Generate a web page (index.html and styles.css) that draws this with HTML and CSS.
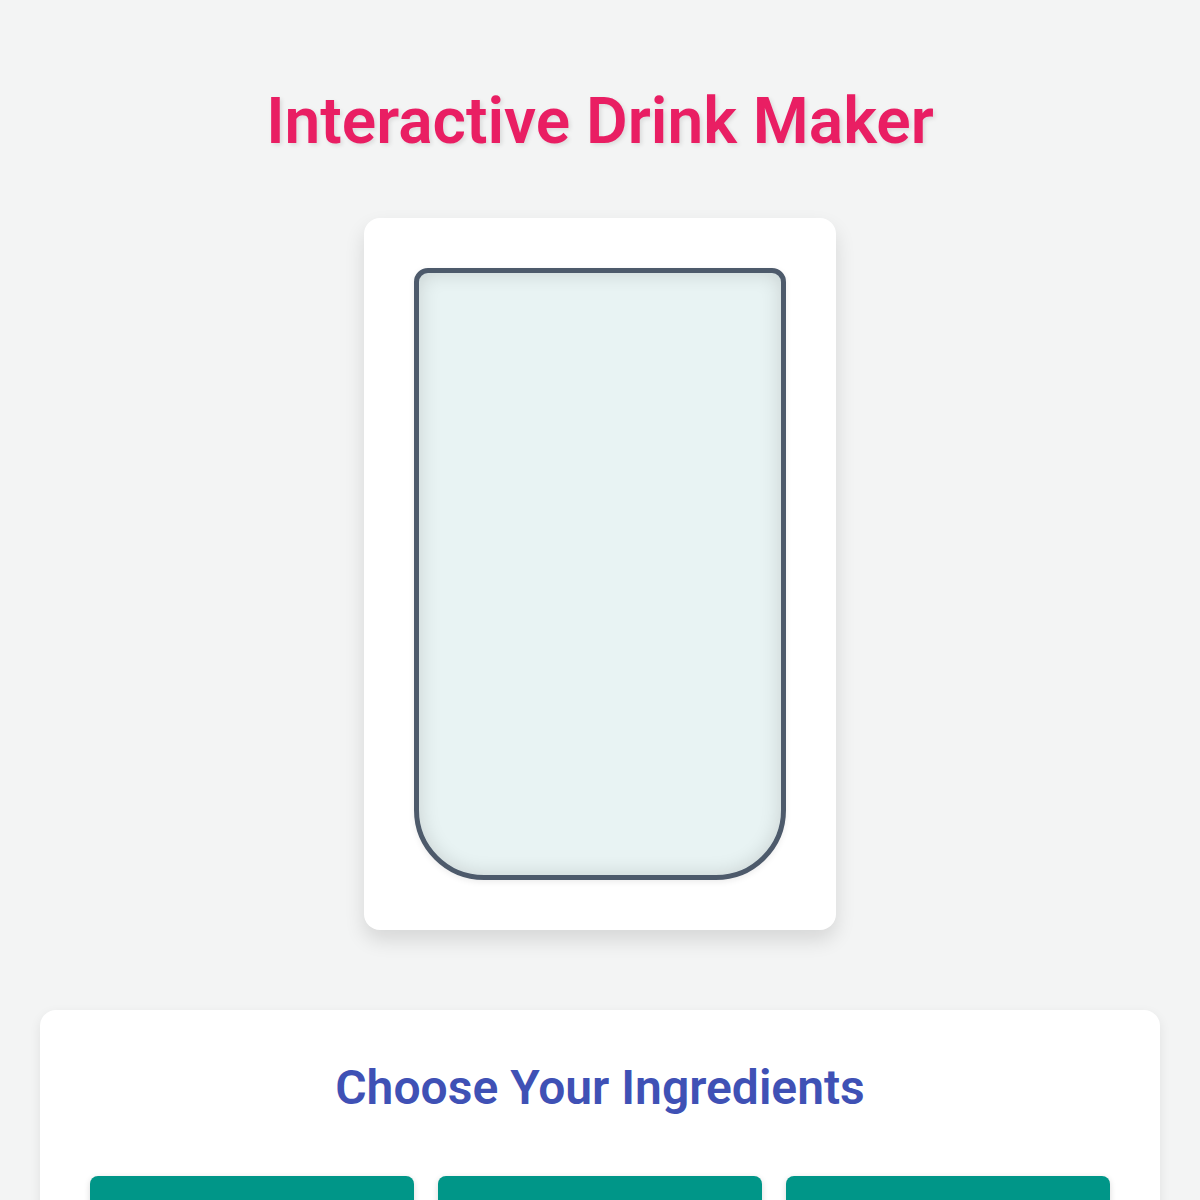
FILE: index.html
```
<!DOCTYPE html>
<html lang="en">
<head>
    <meta charset="utf-8" />
    <title>Interactive Drink Maker</title>
    <link rel="stylesheet" href="styles.css">
</head>
<body>
    <h1 class="title">Interactive Drink Maker</h1>
    <div class="glass-card">
        <div class="glass"></div>
    </div>
    <section class="panel">
        <h2 class="panel-title">Choose Your Ingredients</h2>
        <div class="ingredients">
            <button class="ingredient">Orange Juice</button>
            <button class="ingredient">Lemonade</button>
            <button class="ingredient">Cranberry</button>
        </div>
    </section>
</body>
</html>
```

FILE: styles.css
```
body {
    margin: 0;
    padding: 40px 40px;
    background: #f3f4f4;
    font-family: Roboto, "Noto Sans", sans-serif;
}
.title {
    margin: 44px 0 57px;
    text-align: center;
    font-size: 64px;
    font-weight: 600;
    line-height: 1.2;
    color: #e91e63;
    text-shadow: 2px 2px 4px rgba(0, 0, 0, 0.1);
}
.glass-card {
    width: 372px;
    margin: 0 auto;
    padding: 50px;
    background: #fff;
    border-radius: 16px;
    box-shadow: 0 10px 20px rgba(0, 0, 0, 0.12);
}
.glass {
    height: 602px;
    border: 5px solid #4d5a6b;
    border-radius: 14px 14px 70px 70px;
    background: #e8f3f3;
    box-shadow: inset 0 0 20px rgba(0, 0, 0, 0.14), 0 2px 6px rgba(0, 0, 0, 0.08);
}
.panel {
    margin-top: 80px;
    padding: 49px 50px 40px;
    background: #fff;
    border-radius: 16px;
    box-shadow: 0 4px 12px rgba(0, 0, 0, 0.08);
}
.panel-title {
    margin: 0 0 60px;
    text-align: center;
    font-size: 48px;
    font-weight: 600;
    color: #3f51b5;
}
.ingredients {
    display: grid;
    grid-template-columns: repeat(3, 1fr);
    gap: 24px;
}
.ingredient {
    padding: 30px 16px;
    border: none;
    border-radius: 8px;
    background: #009688;
    color: #fff;
    font: 600 20px Roboto, sans-serif;
    box-shadow: 0 2px 6px rgba(0, 0, 0, 0.15);
}
```
